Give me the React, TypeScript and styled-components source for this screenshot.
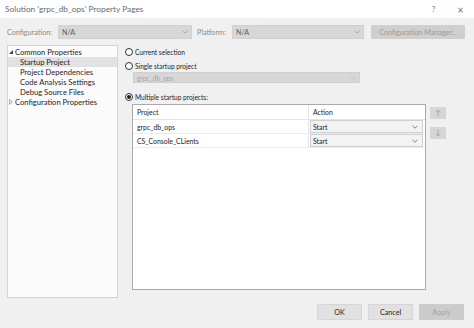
import styled, {createGlobalStyle} from "styled-components";

const GlobalStyle = createGlobalStyle`
  html, body {
    margin: 0;
    padding: 0;
    background: #f0f0f0;
  }
  body {
    font-family: Lato, "Noto Sans", sans-serif;
    font-size: 7.2px;
    color: #1e1e1e;
  }
`;

const Window = styled.div`
  width: 474px;
  height: 328px;
  display: flex;
  flex-direction: column;
  background: #f0f0f0;
  overflow: hidden;
  white-space: nowrap;
`;

const TitleBar = styled.div`
  height: 18px;
  flex-shrink: 0;
  background: #ffffff;
  display: flex;
  align-items: center;
  justify-content: space-between;
  padding-left: 5px;
  color: #6a6a6a;
  font-size: 8.3px;
`;

const Controls = styled.div`
  display: flex;
  height: 100%;
`;

const Control = styled.span<{big?: boolean}>`
  width: 27px;
  display: flex;
  align-items: center;
  justify-content: center;
  color: #777;
  font-size: ${(p) => (p.big ? "11px" : "8px")};
`;

const ConfigRow = styled.div`
  display: flex;
  align-items: center;
  height: 14px;
  margin-top: 7px;
  padding-left: 7px;
`;

const Label = styled.span<{w: number; ml?: number}>`
  width: ${(p) => p.w}px;
  flex-shrink: 0;
  margin-left: ${(p) => p.ml || 0}px;
  color: #8a8a8a;
`;

const Dropdown = styled.div<{w: number; h?: number}>`
  width: ${(p) => p.w}px;
  height: ${(p) => p.h || 14}px;
  flex-shrink: 0;
  box-sizing: border-box;
  background: #d7d7d7;
  border: 1px solid #d0d0d0;
  display: flex;
  align-items: center;
  justify-content: space-between;
  padding: 0 3px;
  color: #5e5e5e;
`;

const Chevron = ({color = "#a0a0a0"}: {color?: string}) => (
  <svg width="6" height="4" viewBox="0 0 6 4">
    <path d="M0.5 0.8 L3 3.2 L5.5 0.8" fill="none" stroke={color} strokeWidth="0.9" />
  </svg>
);

const GhostButton = styled.div<{w: number; ml?: number}>`
  width: ${(p) => p.w}px;
  height: 14px;
  margin-left: ${(p) => p.ml || 0}px;
  box-sizing: border-box;
  background: #cfcfcf;
  color: #9a9a9a;
  display: flex;
  align-items: center;
  justify-content: center;
`;

const Main = styled.div`
  display: flex;
  margin-top: 6px;
  height: 253px;
`;

const Tree = styled.div`
  width: 111px;
  margin-left: 7px;
  box-sizing: border-box;
  background: #fbfbfb;
  border: 1px solid #d4d4d4;
  padding-top: 1px;
  font-size: 7.6px;
`;

const TreeItem = styled.div<{level: number; selected?: boolean}>`
  height: 10px;
  display: flex;
  align-items: center;
  padding-left: ${(p) => (p.level ? 12 : 1)}px;
  background: ${(p) => (p.selected ? "#e2e2e2" : "transparent")};
`;

const Expander = styled.span`
  width: 6px;
  display: flex;
  align-items: center;
`;

const Pane = styled.div`
  margin-left: 5px;
  flex: 1;
  display: flex;
  flex-direction: column;
  padding-top: 2px;
`;

const RadioRow = styled.label<{mt?: number}>`
  height: 10px;
  display: flex;
  align-items: center;
  margin-top: ${(p) => p.mt || 0}px;
  padding-left: 2px;
  gap: 2px;
  font-size: 6.6px;
`;

const RadioCircle = styled.span<{checked?: boolean}>`
  width: 8px;
  height: 8px;
  box-sizing: border-box;
  border: 1px solid #333;
  border-radius: 50%;
  background: #fff;
  display: flex;
  align-items: center;
  justify-content: center;
  &::after {
    content: "";
    width: 4px;
    height: 4px;
    border-radius: 50%;
    background: ${(p) => (p.checked ? "#1e1e1e" : "transparent")};
  }
`;

const Indented = styled.div`
  margin: 1px 0 0 10px;
  font-size: 6.6px;
`;

const TableArea = styled.div`
  display: flex;
  margin-top: 2px;
  margin-left: 9px;
`;

const Table = styled.div`
  width: 294px;
  height: 186px;
  box-sizing: border-box;
  background: #ffffff;
  border: 1px solid #a9a9a9;
  font-size: 6.9px;
`;

const TRow = styled.div<{header?: boolean}>`
  display: grid;
  grid-template-columns: 176px 1fr;
  height: ${(p) => (p.header ? 15 : 14)}px;
  border-bottom: 1px solid ${(p) => (p.header ? "#e4e4e4" : "#ececec")};
  box-sizing: border-box;
`;

const Cell = styled.div<{divider?: boolean}>`
  display: flex;
  align-items: center;
  padding-left: 4px;
  border-right: ${(p) => (p.divider ? "1px solid #e4e4e4" : "none")};
`;

const ActionCell = styled.div`
  padding: 0 2px 0 1px;
  display: flex;
  align-items: center;
`;

const Select = styled.div`
  flex: 1;
  height: 13px;
  box-sizing: border-box;
  background: #f3f3f3;
  border: 1px solid #d0d0d0;
  display: flex;
  align-items: center;
  justify-content: space-between;
  padding: 0 4px 0 2px;
`;

const MoveButtons = styled.div`
  display: flex;
  flex-direction: column;
  margin-left: 4px;
  padding-top: 3px;
  gap: 8px;
`;

const MoveButton = styled.div`
  width: 16px;
  height: 12px;
  background: #d6d6d6;
  display: flex;
  align-items: center;
  justify-content: center;
`;

const Footer = styled.div`
  display: flex;
  justify-content: flex-end;
  gap: 6px;
  margin-top: 6px;
  padding-right: 10px;
`;

const DialogButton = styled.div<{disabled?: boolean}>`
  width: 45px;
  height: 16px;
  box-sizing: border-box;
  background: ${(p) => (p.disabled ? "#cccccc" : "#e1e1e1")};
  border: 1px solid ${(p) => (p.disabled ? "#cccccc" : "#d6d6d6")};
  color: ${(p) => (p.disabled ? "#a2a2a2" : "#1e1e1e")};
  display: flex;
  align-items: center;
  justify-content: center;
`;

const Arrow = ({down}: {down?: boolean}) => (
  <svg width="6" height="8" viewBox="0 0 6 8">
    <g transform={down ? "rotate(180 3 4)" : undefined} fill="none" stroke="#a3a3a3" strokeWidth="0.9">
      <path d="M3 7.5 V1" />
      <path d="M0.8 3.2 L3 1 L5.2 3.2" />
    </g>
  </svg>
);

const projects = ["grpc_db_ops", "CS_Console_CLients"];

function App() {
  return (
    <Window>
      <GlobalStyle />
      <TitleBar>
        <span>Solution 'grpc_db_ops' Property Pages</span>
        <Controls>
          <Control>?</Control>
          <Control big>×</Control>
        </Controls>
      </TitleBar>

      <ConfigRow>
        <Label w={51}>Configuration:</Label>
        <Dropdown w={134}>
          <span>N/A</span>
          <Chevron />
        </Dropdown>
        <Label w={35} ml={5}>Platform:</Label>
        <Dropdown w={132}>
          <span>N/A</span>
          <Chevron />
        </Dropdown>
        <GhostButton w={94} ml={7}>Configuration Manager...</GhostButton>
      </ConfigRow>

      <Main>
        <Tree>
          <TreeItem level={0}>
            <Expander>
              <svg width="4" height="4" viewBox="0 0 4 4">
                <path d="M4 0 L4 4 L0 4 Z" fill="#444" />
              </svg>
            </Expander>
            Common Properties
          </TreeItem>
          <TreeItem level={1} selected>Startup Project</TreeItem>
          <TreeItem level={1}>Project Dependencies</TreeItem>
          <TreeItem level={1}>Code Analysis Settings</TreeItem>
          <TreeItem level={1}>Debug Source Files</TreeItem>
          <TreeItem level={0}>
            <Expander>
              <svg width="4" height="6" viewBox="0 0 4 6">
                <path d="M0.5 0.5 L3.5 3 L0.5 5.5 Z" fill="none" stroke="#999" strokeWidth="0.8" />
              </svg>
            </Expander>
            Configuration Properties
          </TreeItem>
        </Tree>

        <Pane>
          <RadioRow>
            <RadioCircle />
            Current selection
          </RadioRow>
          <RadioRow mt={4}>
            <RadioCircle />
            Single startup project
          </RadioRow>
          <Indented>
            <Dropdown w={227} h={11}>
              <span style={{color: "#a6a6a6"}}>grpc_db_ops</span>
              <Chevron color="#c4c4c4" />
            </Dropdown>
          </Indented>
          <RadioRow mt={9}>
            <RadioCircle checked />
            Multiple startup projects:
          </RadioRow>
          <TableArea>
            <Table>
              <TRow header>
                <Cell divider>Project</Cell>
                <Cell>Action</Cell>
              </TRow>
              {projects.map((name) => (
                <TRow key={name}>
                  <Cell divider>{name}</Cell>
                  <ActionCell>
                    <Select>
                      <span>Start</span>
                      <Chevron color="#777" />
                    </Select>
                  </ActionCell>
                </TRow>
              ))}
            </Table>
            <MoveButtons>
              <MoveButton>
                <Arrow />
              </MoveButton>
              <MoveButton>
                <Arrow down />
              </MoveButton>
            </MoveButtons>
          </TableArea>
        </Pane>
      </Main>

      <Footer>
        <DialogButton>OK</DialogButton>
        <DialogButton>Cancel</DialogButton>
        <DialogButton disabled>Apply</DialogButton>
      </Footer>
    </Window>
  );
}

export default App;
